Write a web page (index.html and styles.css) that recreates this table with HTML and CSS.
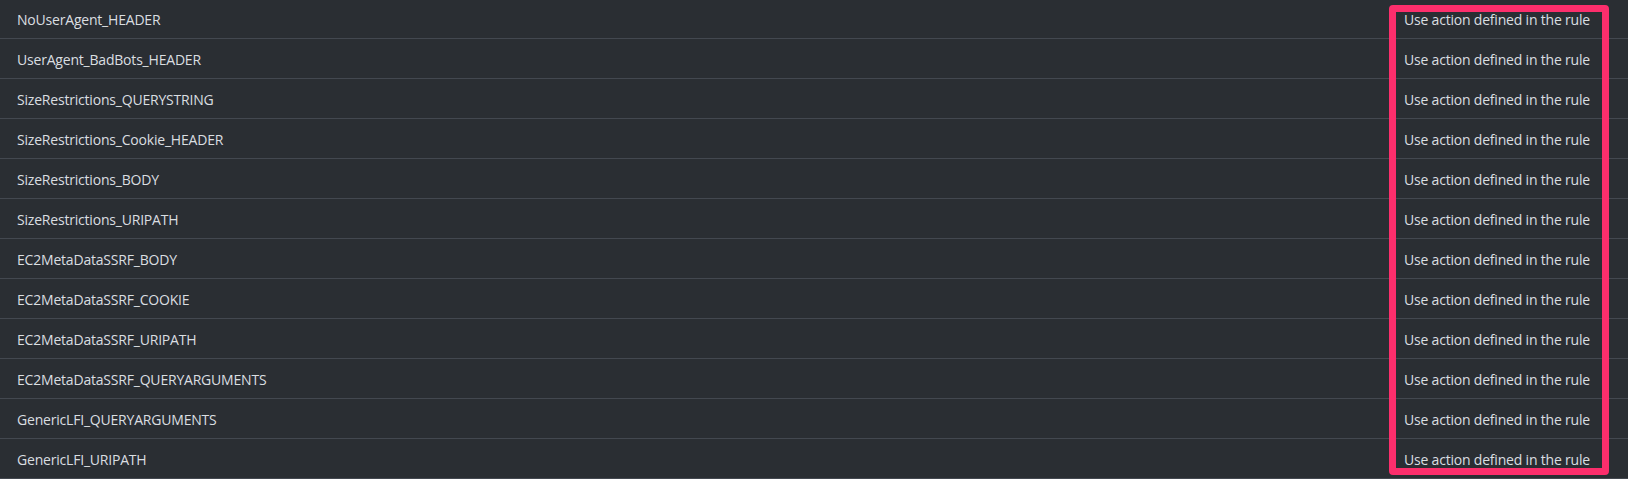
FILE: index.html
```html
<!DOCTYPE html>
<html lang="en">
<head>
<meta charset="utf-8">
<title>Rules</title>
<link rel="stylesheet" href="styles.css">
</head>
<body>
<div class="table">
  <div class="row"><div class="name">NoUserAgent_HEADER</div><div class="action">Use action defined in the rule</div></div>
  <div class="row"><div class="name">UserAgent_BadBots_HEADER</div><div class="action">Use action defined in the rule</div></div>
  <div class="row"><div class="name">SizeRestrictions_QUERYSTRING</div><div class="action">Use action defined in the rule</div></div>
  <div class="row"><div class="name">SizeRestrictions_Cookie_HEADER</div><div class="action">Use action defined in the rule</div></div>
  <div class="row"><div class="name">SizeRestrictions_BODY</div><div class="action">Use action defined in the rule</div></div>
  <div class="row"><div class="name">SizeRestrictions_URIPATH</div><div class="action">Use action defined in the rule</div></div>
  <div class="row"><div class="name">EC2MetaDataSSRF_BODY</div><div class="action">Use action defined in the rule</div></div>
  <div class="row"><div class="name">EC2MetaDataSSRF_COOKIE</div><div class="action">Use action defined in the rule</div></div>
  <div class="row"><div class="name">EC2MetaDataSSRF_URIPATH</div><div class="action">Use action defined in the rule</div></div>
  <div class="row"><div class="name">EC2MetaDataSSRF_QUERYARGUMENTS</div><div class="action">Use action defined in the rule</div></div>
  <div class="row"><div class="name">GenericLFI_QUERYARGUMENTS</div><div class="action">Use action defined in the rule</div></div>
  <div class="row"><div class="name">GenericLFI_URIPATH</div><div class="action">Use action defined in the rule</div></div>
  <div class="highlight"></div>
</div>
</body>
</html>
```

FILE: styles.css
```css
html, body {
  margin: 0;
  padding: 0;
  background: #2a2e33;
  height: 100%;
  overflow: hidden;
}

body {
  font-family: "Open Sans", "Noto Sans", sans-serif;
  font-size: 14px;
  font-weight: 500;
  letter-spacing: -0.2px;
  color: #dadee1;
}

.table {
  position: relative;
  margin-top: -1px;
}

.row {
  display: grid;
  grid-template-columns: 1fr 224px;
  align-items: center;
  border-bottom: 1px solid #434850;
  padding-top: 1px;
  box-sizing: border-box;
  height: 40px;
}

.name {
  padding-left: 17px;
}

.highlight {
  position: absolute;
  left: 1389px;
  top: 6px;
  width: 220px;
  height: 470px;
  box-sizing: border-box;
  border: 7px solid #fc2e6c;
  border-radius: 4px;
}
```
